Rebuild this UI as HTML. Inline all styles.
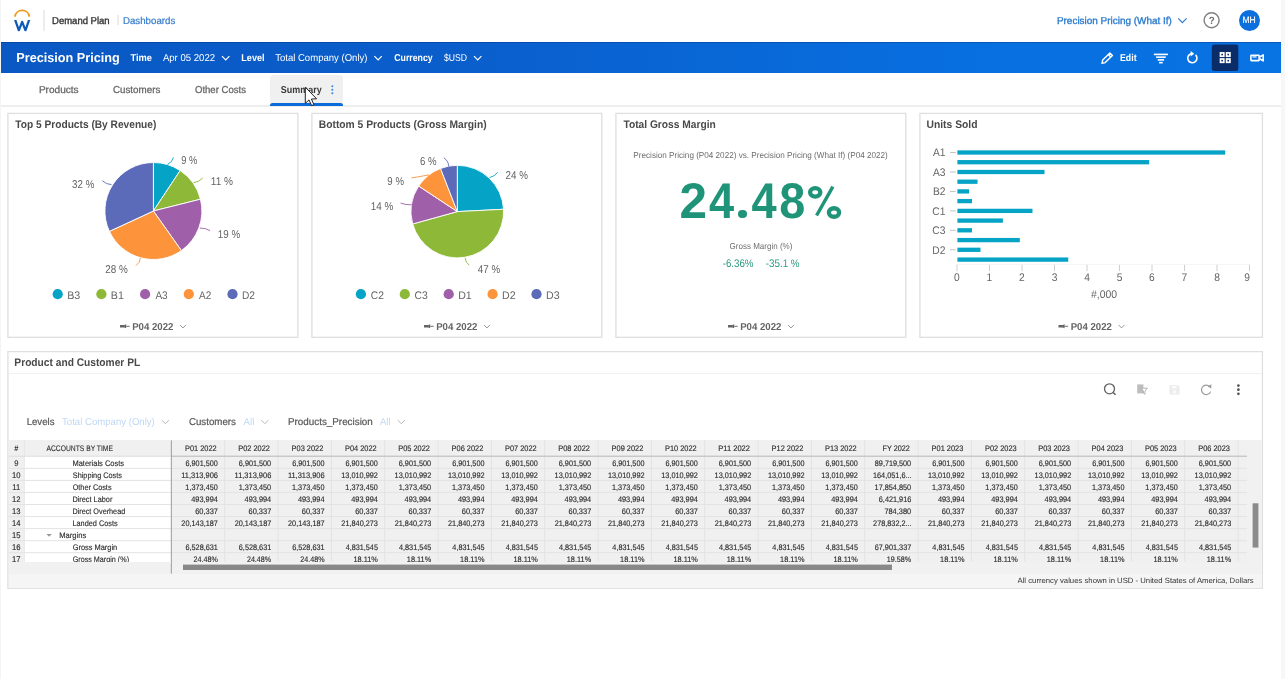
<!DOCTYPE html>
<html><head><meta charset="utf-8"><title>Precision Pricing</title>
<style>
html,body{margin:0;padding:0;background:#fff}
body{width:1285px;height:679px;position:relative;overflow:hidden;font-family:"Liberation Sans", sans-serif}
#t{filter:blur(0.3px)}
#t span{position:absolute;white-space:pre;font-family:"Liberation Sans", sans-serif;text-rendering:geometricPrecision;transform-origin:0 0}
svg{overflow:visible}
</style></head><body>
<div style="position:absolute;left:0;top:0;width:1px;height:679px;background:#f4f4f4"></div>
<div style="position:absolute;left:1281px;top:0;width:4px;height:679px;background:#f7f7f7"></div>
<svg style="position:absolute;left:10px;top:6px" width="26" height="28" viewBox="10 6 26 28">
<defs><clipPath id="wc"><rect x="12" y="20" width="22" height="11.5"/></clipPath></defs>
<path d="M14.93 16.6 A7.3 7.3 0 0 1 29.37 16.6" fill="none" stroke="#ee9a1e" stroke-width="1.9" stroke-linecap="butt"/>
<path d="M14.6 18.2 L18.85 30.3 L22.15 21.9 L25.45 30.3 L29.7 18.2" clip-path="url(#wc)" fill="none" stroke="#0d5bb8" stroke-width="2.25" stroke-linejoin="round"/>
</svg>
<div style="position:absolute;left:43.3px;top:9.7px;width:1.4px;height:21px;background:#ededed"></div>
<div style="position:absolute;left:117.4px;top:15.1px;width:1.3px;height:10.4px;background:#ececec"></div>
<svg style="position:absolute;left:1176px;top:15px" width="14" height="12" viewBox="1176 15 14 12">
<path d="M1178.2 18.4 L1182.4 22.6 L1186.6 18.4" fill="none" stroke="#2f7ccd" stroke-width="1.2"/></svg>
<svg style="position:absolute;left:1200px;top:9px" width="24" height="24" viewBox="1200 9 24 24">
<circle cx="1211.6" cy="20.2" r="7.5" fill="none" stroke="#808080" stroke-width="1.45"/></svg>
<div style="position:absolute;left:1238.5px;top:9.7px;width:21px;height:21px;border-radius:50%;background:#0b6fde"></div>
<div style="position:absolute;left:1px;top:41.6px;width:1280px;height:31.8px;background:linear-gradient(90deg,#0a58c4 0%,#0a5ecb 35%,#086fe0 75%,#0873e3 100%)"></div>
<div style="position:absolute;left:1px;top:41.6px;width:1280px;height:1px;background:rgba(5,40,110,0.35)"></div>
<svg style="position:absolute;left:0;top:40px" width="1285" height="36" viewBox="0 40 1285 36"><path d="M222.00 56.15 L225.70 59.85 L229.40 56.15" fill="none" stroke="#fff" stroke-width="1.2"/><path d="M374.40 56.15 L378.10 59.85 L381.80 56.15" fill="none" stroke="#fff" stroke-width="1.2"/><path d="M474.00 56.15 L477.70 59.85 L481.40 56.15" fill="none" stroke="#fff" stroke-width="1.2"/><g fill="none" stroke="#fff" stroke-width="1.45" stroke-linejoin="round"><path d="M1102 63.3 L1102.7 60.1 L1109.9 52.9 L1112.4 55.4 L1105.2 62.6 Z"/><path d="M1108.2 54.6 L1110.7 57.1"/></g><rect x="1153.90" y="53.60" width="14" height="1.6" fill="#fff"/><rect x="1156.10" y="56.35" width="9.6" height="1.6" fill="#fff"/><rect x="1157.70" y="59.10" width="6.4" height="1.6" fill="#fff"/><rect x="1159.10" y="61.85" width="3.6" height="1.6" fill="#fff"/><path d="M1191.2 53.7 A4.6 4.6 0 1 0 1195.6 54.9" fill="none" stroke="#fff" stroke-width="1.6"/><path d="M1190.6 51.0 L1194.3 53.7 L1190.6 56.4 Z" fill="#fff"/><rect x="1211.8" y="44.5" width="26.5" height="26.5" rx="2.5" fill="#0a2c69"/><rect x="1220.5" y="52.9" width="3.3" height="3.3" fill="none" stroke="#fff" stroke-width="1.7"/><rect x="1220.5" y="59.0" width="3.3" height="3.3" fill="none" stroke="#fff" stroke-width="1.7"/><rect x="1226.6" y="52.9" width="3.3" height="3.3" fill="none" stroke="#fff" stroke-width="1.7"/><rect x="1226.6" y="59.0" width="3.3" height="3.3" fill="none" stroke="#fff" stroke-width="1.7"/><g fill="none" stroke="#fff" stroke-width="1.6" stroke-linejoin="round"><rect x="1250.9" y="55.2" width="8.2" height="5.4" rx="0.5"/><path d="M1259.6 57.0 L1263.2 54.9 L1263.2 60.9 L1259.6 58.8" /></g><rect x="1252.4" y="56.3" width="4.2" height="1.2" fill="#fff"/></svg>
<div style="position:absolute;left:1px;top:105.2px;width:1280px;height:1.5px;background:#eeeeef"></div>
<div style="position:absolute;left:270.2px;top:75.4px;width:72.6px;height:30.4px;background:#f1f0f0;border-radius:3px 3px 0 0"></div>
<div style="position:absolute;left:270.2px;top:103px;width:72.6px;height:2.8px;background:#0b6bd8;border-radius:2.5px 2.5px 0 0"></div>
<svg style="position:absolute;left:328px;top:83px" width="9" height="14" viewBox="328 83 9 14">
<circle cx="332.3" cy="86.2" r="1.0" fill="#3583dc"/><circle cx="332.3" cy="89.7" r="1.0" fill="#3583dc"/><circle cx="332.3" cy="93.2" r="1.0" fill="#3583dc"/></svg>
<svg style="position:absolute;left:0;top:0" width="1285" height="679"><rect x="7.9" y="113.4" width="290.0" height="223.9" fill="#fff" stroke="#dfdfdf" stroke-width="1.3"/></svg>
<svg style="position:absolute;left:0;top:0" width="1285" height="679"><rect x="311.9" y="113.4" width="289.9" height="223.9" fill="#fff" stroke="#dfdfdf" stroke-width="1.3"/></svg>
<svg style="position:absolute;left:0;top:0" width="1285" height="679"><rect x="615.9" y="113.4" width="289.9" height="223.9" fill="#fff" stroke="#dfdfdf" stroke-width="1.3"/></svg>
<svg style="position:absolute;left:0;top:0" width="1285" height="679"><rect x="919.9" y="113.4" width="342.5000000000001" height="223.9" fill="#fff" stroke="#dfdfdf" stroke-width="1.3"/></svg>
<svg style="position:absolute;left:0;top:318px" width="1285" height="16" viewBox="0 318 1285 16"><rect x="120.00" y="325.0" width="4.4" height="2.5" fill="#646464"/><path d="M124.20 325.0 L126.10 324.2 V328.3 L124.20 327.5 Z" fill="#646464"/><rect x="126.00" y="325.8" width="3.7" height="0.9" fill="#646464"/><path d="M180.20 325.05 L183.00 327.95 L185.80 325.05" fill="none" stroke="#8f8f8f" stroke-width="0.95"/><rect x="424.00" y="325.0" width="4.4" height="2.5" fill="#646464"/><path d="M428.20 325.0 L430.10 324.2 V328.3 L428.20 327.5 Z" fill="#646464"/><rect x="430.00" y="325.8" width="3.7" height="0.9" fill="#646464"/><path d="M484.20 325.05 L487.00 327.95 L489.80 325.05" fill="none" stroke="#8f8f8f" stroke-width="0.95"/><rect x="728.00" y="325.0" width="4.4" height="2.5" fill="#646464"/><path d="M732.20 325.0 L734.10 324.2 V328.3 L732.20 327.5 Z" fill="#646464"/><rect x="734.00" y="325.8" width="3.7" height="0.9" fill="#646464"/><path d="M788.20 325.05 L791.00 327.95 L793.80 325.05" fill="none" stroke="#8f8f8f" stroke-width="0.95"/><rect x="1058.50" y="325.0" width="4.4" height="2.5" fill="#646464"/><path d="M1062.70 325.0 L1064.60 324.2 V328.3 L1062.70 327.5 Z" fill="#646464"/><rect x="1064.50" y="325.8" width="3.7" height="0.9" fill="#646464"/><path d="M1118.70 325.05 L1121.50 327.95 L1124.30 325.05" fill="none" stroke="#8f8f8f" stroke-width="0.95"/></svg>
<svg style="position:absolute;left:0;top:140px" width="1285" height="170" viewBox="0 140 1285 170"><path d="M153.4 211.0 L153.40 162.50 A48.5 48.5 0 0 1 180.15 170.55 Z" fill="#05a3c6" stroke="#fff" stroke-width="0.9" stroke-linejoin="round"/><path d="M153.4 211.0 L180.15 170.55 A48.5 48.5 0 0 1 200.45 199.23 Z" fill="#8db838" stroke="#fff" stroke-width="0.9" stroke-linejoin="round"/><path d="M153.4 211.0 L200.45 199.23 A48.5 48.5 0 0 1 181.41 250.59 Z" fill="#a05fa9" stroke="#fff" stroke-width="0.9" stroke-linejoin="round"/><path d="M153.4 211.0 L181.41 250.59 A48.5 48.5 0 0 1 109.39 231.37 Z" fill="#fd933b" stroke="#fff" stroke-width="0.9" stroke-linejoin="round"/><path d="M153.4 211.0 L109.39 231.37 A48.5 48.5 0 0 1 153.40 162.50 Z" fill="#5c6bb9" stroke="#fff" stroke-width="0.9" stroke-linejoin="round"/><path d="M167.6 164.4 Q172.25 162.35 173.4 157.4" fill="none" stroke="#05a3c6" stroke-width="0.9"/><path d="M193.6 182.7 Q199.09 182.17 202.7 178.0" fill="none" stroke="#8db838" stroke-width="0.9"/><path d="M199.8 228.1 Q205.32 227.81 210.1 230.6" fill="none" stroke="#a05fa9" stroke-width="0.9"/><path d="M140.4 258.0 Q140.05 262.93 135.9 265.6" fill="none" stroke="#fd933b" stroke-width="0.9"/><path d="M111.5 184.6 Q106.12 184.49 102.3 180.7" fill="none" stroke="#5c6bb9" stroke-width="0.9"/><path d="M457.3 211.6 L457.30 165.30 A46.3 46.3 0 0 1 503.54 209.27 Z" fill="#05a3c6" stroke="#fff" stroke-width="0.9" stroke-linejoin="round"/><path d="M457.3 211.6 L503.54 209.27 A46.3 46.3 0 0 1 412.68 223.96 Z" fill="#8db838" stroke="#fff" stroke-width="0.9" stroke-linejoin="round"/><path d="M457.3 211.6 L412.68 223.96 A46.3 46.3 0 0 1 418.68 186.06 Z" fill="#a05fa9" stroke="#fff" stroke-width="0.9" stroke-linejoin="round"/><path d="M457.3 211.6 L418.68 186.06 A46.3 46.3 0 0 1 440.53 168.45 Z" fill="#fd933b" stroke="#fff" stroke-width="0.9" stroke-linejoin="round"/><path d="M457.3 211.6 L440.53 168.45 A46.3 46.3 0 0 1 457.30 165.30 Z" fill="#5c6bb9" stroke="#fff" stroke-width="0.9" stroke-linejoin="round"/><path d="M489.5 177.6 Q494.68 176.54 497.7 172.2" fill="none" stroke="#05a3c6" stroke-width="0.9"/><path d="M465.2 258.0 Q465.45 262.62 469.3 265.2" fill="none" stroke="#8db838" stroke-width="0.9"/><path d="M411.5 204.8 Q405.88 205.04 400.6 203.1" fill="none" stroke="#a05fa9" stroke-width="0.9"/><path d="M429.0 174.9 Q420.25 176.45 411.5 178.0" fill="none" stroke="#fd933b" stroke-width="0.9"/><path d="M448.7 166.2 Q448.40 160.80 443.9 157.8" fill="none" stroke="#5c6bb9" stroke-width="0.9"/><circle cx="57.70" cy="294.2" r="5.1" fill="#05a3c6"/><circle cx="360.90" cy="294.2" r="5.1" fill="#05a3c6"/><circle cx="101.40" cy="294.2" r="5.1" fill="#8db838"/><circle cx="404.80" cy="294.2" r="5.1" fill="#8db838"/><circle cx="145.10" cy="294.2" r="5.1" fill="#a05fa9"/><circle cx="448.70" cy="294.2" r="5.1" fill="#a05fa9"/><circle cx="188.80" cy="294.2" r="5.1" fill="#fd933b"/><circle cx="492.60" cy="294.2" r="5.1" fill="#fd933b"/><circle cx="232.50" cy="294.2" r="5.1" fill="#5c6bb9"/><circle cx="536.50" cy="294.2" r="5.1" fill="#5c6bb9"/></svg>
<div style="position:absolute;left:738.3px;top:209.6px;width:8.8px;height:8.8px;border-radius:50%;background:#1f9479"></div>
<svg style="position:absolute;left:800px;top:180px" width="50" height="44" viewBox="800 180 50 44">
<g fill="none" stroke="#1f9479"><ellipse cx="815.2" cy="192.3" rx="5.1" ry="4.25" stroke-width="4.3"/><ellipse cx="834.0" cy="212.5" rx="5.1" ry="4.25" stroke-width="4.3"/>
<path d="M832.9 186.6 L816.6 215.5" stroke-width="3.4"/></g></svg>
<svg style="position:absolute;left:920px;top:140px" width="343" height="170" viewBox="920 140 343 170"><rect x="957.4" y="150.35" width="267.80" height="4.3" fill="#05a3c6"/><rect x="957.4" y="160.05" width="191.75" height="4.3" fill="#05a3c6"/><rect x="957.4" y="169.85" width="87.10" height="4.3" fill="#05a3c6"/><rect x="957.4" y="179.55" width="20.15" height="4.3" fill="#05a3c6"/><rect x="957.4" y="189.25" width="11.70" height="4.3" fill="#05a3c6"/><rect x="957.4" y="198.95" width="14.62" height="4.3" fill="#05a3c6"/><rect x="957.4" y="208.75" width="75.08" height="4.3" fill="#05a3c6"/><rect x="957.4" y="218.45" width="45.50" height="4.3" fill="#05a3c6"/><rect x="957.4" y="228.15" width="14.62" height="4.3" fill="#05a3c6"/><rect x="957.4" y="237.95" width="62.40" height="4.3" fill="#05a3c6"/><rect x="957.4" y="247.65" width="23.07" height="4.3" fill="#05a3c6"/><rect x="957.4" y="257.45" width="110.83" height="4.3" fill="#05a3c6"/><rect x="956.50" y="264.2" width="1" height="7" fill="#cfcfcf"/><rect x="989.00" y="264.2" width="1" height="7" fill="#cfcfcf"/><rect x="1021.50" y="264.2" width="1" height="7" fill="#cfcfcf"/><rect x="1054.00" y="264.2" width="1" height="7" fill="#cfcfcf"/><rect x="1086.50" y="264.2" width="1" height="7" fill="#cfcfcf"/><rect x="1119.00" y="264.2" width="1" height="7" fill="#cfcfcf"/><rect x="1151.50" y="264.2" width="1" height="7" fill="#cfcfcf"/><rect x="1184.00" y="264.2" width="1" height="7" fill="#cfcfcf"/><rect x="1216.50" y="264.2" width="1" height="7" fill="#cfcfcf"/><rect x="1249.00" y="264.2" width="1" height="7" fill="#cfcfcf"/><rect x="957" y="264.0" width="293" height="0.8" fill="#f3f3f3"/><rect x="950" y="152.00" width="5.8" height="1" fill="#c4c4c4"/><rect x="950" y="171.50" width="5.8" height="1" fill="#c4c4c4"/><rect x="950" y="190.90" width="5.8" height="1" fill="#c4c4c4"/><rect x="950" y="210.40" width="5.8" height="1" fill="#c4c4c4"/><rect x="950" y="229.80" width="5.8" height="1" fill="#c4c4c4"/><rect x="950" y="249.30" width="5.8" height="1" fill="#c4c4c4"/></svg>
<svg style="position:absolute;left:0;top:0" width="1285" height="679"><rect x="7.9" y="351.6" width="1254.5" height="236.69999999999993" fill="#fff" stroke="#dfdfdf" stroke-width="1.3"/></svg>
<div style="position:absolute;left:9px;top:373.2px;width:1253px;height:1px;background:#f1f1f1"></div>
<svg style="position:absolute;left:1095px;top:378px" width="160" height="24" viewBox="1095 378 160 24">
<circle cx="1109.5" cy="388.8" r="5.0" fill="none" stroke="#606060" stroke-width="1.3"/>
<path d="M1113.2 392.5 L1115.6 394.8" stroke="#5a5a5a" stroke-width="1.4" fill="none"/>
<rect x="1137.2" y="384.4" width="6.2" height="9" fill="#bdbdbd"/>
<path d="M1141.0 388.2 H1147.4 L1145 391 V394.3 L1143.4 393.2 V391 Z" fill="#fff" stroke="#a9a9a9" stroke-width="0.9" stroke-linejoin="round"/>
<path d="M1169.4 385 H1177.7 L1179.5 386.8 V394.4 H1169.4 Z" fill="#ececec"/>
<rect x="1171.6" y="385.9" width="5" height="2.6" fill="#fafafa"/><rect x="1172.8" y="390.4" width="3.4" height="3" fill="#fafafa"/>
<path d="M1209.6 386.6 A4.7 4.7 0 1 0 1210.6 391.6" fill="none" stroke="#9b9b9b" stroke-width="1.2"/>
<path d="M1211.4 384.3 L1211.2 388.4 L1207.6 386.6 Z" fill="#9b9b9b"/>
<circle cx="1238.4" cy="385.6" r="1.35" fill="#555"/><circle cx="1238.4" cy="389.7" r="1.35" fill="#555"/><circle cx="1238.4" cy="393.8" r="1.35" fill="#555"/>
</svg>
<svg style="position:absolute;left:0;top:414px" width="420" height="16" viewBox="0 414 420 16"><path d="M161.70 420.10 L165.30 423.70 L168.90 420.10" fill="none" stroke="#b8b8b8" stroke-width="1.0"/><path d="M261.30 420.10 L264.90 423.70 L268.50 420.10" fill="none" stroke="#b8b8b8" stroke-width="1.0"/><path d="M397.70 420.10 L401.30 423.70 L404.90 420.10" fill="none" stroke="#b8b8b8" stroke-width="1.0"/></svg>
<div style="position:absolute;left:8.6px;top:440.4px;width:1253.4px;height:133.20000000000005px;background:#f1f1f1"></div><div style="position:absolute;left:8.6px;top:573.6px;width:1253.4px;height:14.399999999999977px;background:#f5f5f5"></div><div style="position:absolute;left:8.6px;top:440.4px;width:1238.4px;height:121.39999999999998px;background:#f0f0f0"></div><div style="position:absolute;left:24.3px;top:456.3px;width:147.1px;height:105.49999999999994px;background:#fff"></div><svg style="position:absolute;left:0;top:438px" width="1285" height="140" viewBox="0 438 1285 140"><rect x="8.6" y="467.85" width="1238.4" height="1" fill="#e3e3e3"/><rect x="8.6" y="479.90" width="1238.4" height="1" fill="#e3e3e3"/><rect x="8.6" y="491.95" width="1238.4" height="1" fill="#e3e3e3"/><rect x="8.6" y="504.00" width="1238.4" height="1" fill="#e3e3e3"/><rect x="8.6" y="516.05" width="1238.4" height="1" fill="#e3e3e3"/><rect x="8.6" y="528.10" width="1238.4" height="1" fill="#e3e3e3"/><rect x="8.6" y="540.15" width="1238.4" height="1" fill="#e3e3e3"/><rect x="8.6" y="552.20" width="1238.4" height="1" fill="#e3e3e3"/><rect x="224.23" y="440.4" width="1" height="121.39999999999998" fill="#e3e3e3"/><rect x="277.57" y="440.4" width="1" height="121.39999999999998" fill="#e3e3e3"/><rect x="330.90" y="440.4" width="1" height="121.39999999999998" fill="#e3e3e3"/><rect x="384.23" y="440.4" width="1" height="121.39999999999998" fill="#e3e3e3"/><rect x="437.56" y="440.4" width="1" height="121.39999999999998" fill="#e3e3e3"/><rect x="490.90" y="440.4" width="1" height="121.39999999999998" fill="#e3e3e3"/><rect x="544.23" y="440.4" width="1" height="121.39999999999998" fill="#e3e3e3"/><rect x="597.56" y="440.4" width="1" height="121.39999999999998" fill="#e3e3e3"/><rect x="650.90" y="440.4" width="1" height="121.39999999999998" fill="#e3e3e3"/><rect x="704.23" y="440.4" width="1" height="121.39999999999998" fill="#e3e3e3"/><rect x="757.56" y="440.4" width="1" height="121.39999999999998" fill="#e3e3e3"/><rect x="810.90" y="440.4" width="1" height="121.39999999999998" fill="#e3e3e3"/><rect x="864.23" y="440.4" width="1" height="121.39999999999998" fill="#e3e3e3"/><rect x="917.56" y="440.4" width="1" height="121.39999999999998" fill="#e3e3e3"/><rect x="970.89" y="440.4" width="1" height="121.39999999999998" fill="#e3e3e3"/><rect x="1024.23" y="440.4" width="1" height="121.39999999999998" fill="#e3e3e3"/><rect x="1077.56" y="440.4" width="1" height="121.39999999999998" fill="#e3e3e3"/><rect x="1130.89" y="440.4" width="1" height="121.39999999999998" fill="#e3e3e3"/><rect x="1184.23" y="440.4" width="1" height="121.39999999999998" fill="#e3e3e3"/><rect x="1237.56" y="440.4" width="1" height="121.39999999999998" fill="#e3e3e3"/><rect x="23.8" y="440.4" width="1" height="121.39999999999998" fill="#e6e6e6"/><rect x="8.6" y="455.70" width="162.8" height="1" fill="#dcdcdc"/><rect x="171.4" y="455.60" width="1075.6" height="1.3" fill="#c4c4c4"/><rect x="170.80" y="440.4" width="1.2" height="133.20000000000005" fill="#a9a9a9"/><rect x="183.0" y="564.6" width="709" height="5.4" fill="#888"/><rect x="1252.6" y="503.3" width="5.8" height="44.3" fill="#8b8b8b"/><path d="M46.4 533.9 H51.8 L49.1 536.7 Z" fill="#999"/></svg>
<div style="position:absolute;left:8.6px;top:561.8px;width:1253.4px;height:2.6px;background:#f1f1f1;z-index:5"></div>
<div style="position:absolute;left:170.80px;top:561.8px;width:1.2px;height:2.6px;background:#a9a9a9;z-index:6"></div>
<svg style="position:absolute;left:303px;top:85px;z-index:20" width="18" height="22" viewBox="303 85 18 22">
<path d="M305.3 87.2 L305.3 103.4 L309.0 99.9 L311.6 105.6 L313.9 104.6 L311.4 99.0 L316.6 98.8 Z" fill="#fff" stroke="#222" stroke-width="1.0" stroke-linejoin="round"/></svg>
<div id="t">
<span style="left:52px;top:17px;font-size:10px;line-height:10px;color:#333;transform:translateX(0.06px) scaleX(0.9502);-webkit-text-stroke:0.35px #333">Demand Plan</span>
<span style="left:122px;top:17px;font-size:10px;line-height:10px;color:#387dca;transform:translateX(0.94px) scaleX(0.9711);-webkit-text-stroke:0.22px #387dca">Dashboards</span>
<span style="left:1056px;top:17px;font-size:10px;line-height:10px;color:#2f7ccd;transform:translateX(0.92px) scaleX(0.9949);-webkit-text-stroke:0.35px #2f7ccd">Precision Pricing (What If)</span>
<span style="left:1208px;top:16px;font-size:10.5px;line-height:10.5px;color:#707070;transform:translateX(0.80px) scaleX(0.9300);font-weight:700">?</span>
<span style="left:1242px;top:16px;font-size:9.2px;line-height:9.2px;color:#ffffff;transform:translateX(0.46px) scaleX(0.9300);-webkit-text-stroke:0.15px #ffffff">MH</span>
<span style="left:16px;top:51px;font-size:13px;line-height:13px;color:#fff;transform:translateX(0.31px) scaleX(0.9746);font-weight:700">Precision Pricing</span>
<span style="left:130px;top:54px;font-size:10px;line-height:10px;color:#fff;transform:translateX(0.40px) scaleX(0.9297);font-weight:700">Time</span>
<span style="left:162px;top:54px;font-size:10px;line-height:10px;color:#fff;transform:translateX(0.90px) scaleX(0.9578)">Apr 05 2022</span>
<span style="left:241px;top:54px;font-size:10px;line-height:10px;color:#fff;transform:translateX(0.33px) scaleX(0.9074);font-weight:700">Level</span>
<span style="left:275px;top:54px;font-size:10px;line-height:10px;color:#fff;transform:translateX(0.15px) scaleX(0.9550)">Total Company (Only)</span>
<span style="left:394px;top:54px;font-size:10px;line-height:10px;color:#fff;transform:translateX(0.23px) scaleX(0.8750);font-weight:700">Currency</span>
<span style="left:444px;top:54px;font-size:10px;line-height:10px;color:#fff;transform:translateX(0.00px) scaleX(0.8622)">$USD</span>
<span style="left:1120px;top:54px;font-size:10px;line-height:10px;color:#fff;transform:translateX(0.05px) scaleX(0.8730);font-weight:700">Edit</span>
<span style="left:38px;top:86px;font-size:10px;line-height:10px;color:#686868;transform:translateX(0.91px) scaleX(1.0060);-webkit-text-stroke:0.3px #686868">Products</span>
<span style="left:112px;top:86px;font-size:10px;line-height:10px;color:#686868;transform:translateX(0.94px) scaleX(0.9797);-webkit-text-stroke:0.3px #686868">Customers</span>
<span style="left:194px;top:86px;font-size:10px;line-height:10px;color:#686868;transform:translateX(0.95px) scaleX(0.9568);-webkit-text-stroke:0.3px #686868">Other Costs</span>
<span style="left:280px;top:86px;font-size:10px;line-height:10px;color:#3a3a3a;transform:translateX(0.76px) scaleX(0.8970);font-weight:700">Summary</span>
<span style="left:15px;top:120px;font-size:11px;line-height:11px;color:#494949;transform:translateX(0.30px) scaleX(0.9244);font-weight:700">Top 5 Products (By Revenue)</span>
<span style="left:318px;top:120px;font-size:11px;line-height:11px;color:#494949;transform:translateX(0.76px) scaleX(0.9345);font-weight:700">Bottom 5 Products (Gross Margin)</span>
<span style="left:623px;top:120px;font-size:11px;line-height:11px;color:#494949;transform:translateX(0.40px) scaleX(0.9293);font-weight:700">Total Gross Margin</span>
<span style="left:926px;top:120px;font-size:11px;line-height:11px;color:#494949;transform:translateX(0.52px) scaleX(0.9366);font-weight:700">Units Sold</span>
<span style="left:132px;top:323px;font-size:10px;line-height:10px;color:#646464;transform:translateX(0.20px) scaleX(0.9632);font-weight:700">P04 2022</span>
<span style="left:436px;top:323px;font-size:10px;line-height:10px;color:#646464;transform:translateX(0.20px) scaleX(0.9632);font-weight:700">P04 2022</span>
<span style="left:740px;top:323px;font-size:10px;line-height:10px;color:#646464;transform:translateX(0.20px) scaleX(0.9632);font-weight:700">P04 2022</span>
<span style="left:1070px;top:323px;font-size:10px;line-height:10px;color:#646464;transform:translateX(0.70px) scaleX(0.9632);font-weight:700">P04 2022</span>
<span style="left:181px;top:156px;font-size:11.4px;line-height:11.4px;color:#646464;transform:translateX(0.16px) scaleX(0.8205)">9 %</span>
<span style="left:210px;top:177px;font-size:11.4px;line-height:11.4px;color:#646464;transform:translateX(0.87px) scaleX(0.8843)">11 %</span>
<span style="left:217px;top:230px;font-size:11.4px;line-height:11.4px;color:#646464;transform:translateX(0.79px) scaleX(0.8583)">19 %</span>
<span style="left:105px;top:265px;font-size:11.4px;line-height:11.4px;color:#646464;transform:translateX(0.34px) scaleX(0.8682)">28 %</span>
<span style="left:72px;top:180px;font-size:11.4px;line-height:11.4px;color:#646464;transform:translateX(0.10px) scaleX(0.8542)">32 %</span>
<span style="left:505px;top:171px;font-size:11.4px;line-height:11.4px;color:#646464;transform:translateX(0.54px) scaleX(0.8602)">24 %</span>
<span style="left:477px;top:265px;font-size:11.4px;line-height:11.4px;color:#646464;transform:translateX(0.85px) scaleX(0.8560)">47 %</span>
<span style="left:370px;top:202px;font-size:11.4px;line-height:11.4px;color:#646464;transform:translateX(0.68px) scaleX(0.8704)">14 %</span>
<span style="left:387px;top:177px;font-size:11.4px;line-height:11.4px;color:#646464;transform:translateX(0.35px) scaleX(0.8471)">9 %</span>
<span style="left:419px;top:157px;font-size:11.4px;line-height:11.4px;color:#646464;transform:translateX(0.95px) scaleX(0.8471)">6 %</span>
<span style="left:67px;top:291px;font-size:11px;line-height:11px;color:#646464;transform:translateX(0.17px) scaleX(0.9712)">B3</span>
<span style="left:110px;top:291px;font-size:11px;line-height:11px;color:#646464;transform:translateX(0.87px) scaleX(0.9712)">B1</span>
<span style="left:155px;top:291px;font-size:11px;line-height:11px;color:#646464;transform:translateX(0.40px) scaleX(0.9071)">A3</span>
<span style="left:199px;top:291px;font-size:11px;line-height:11px;color:#646464;transform:translateX(0.10px) scaleX(0.9071)">A2</span>
<span style="left:242px;top:291px;font-size:11px;line-height:11px;color:#646464;transform:translateX(0.01px) scaleX(0.9250)">D2</span>
<span style="left:370px;top:291px;font-size:11px;line-height:11px;color:#646464;transform:translateX(0.72px) scaleX(0.9389)">C2</span>
<span style="left:414px;top:291px;font-size:11px;line-height:11px;color:#646464;transform:translateX(0.62px) scaleX(0.9389)">C3</span>
<span style="left:458px;top:291px;font-size:11px;line-height:11px;color:#646464;transform:translateX(0.17px) scaleX(0.9642)">D1</span>
<span style="left:502px;top:291px;font-size:11px;line-height:11px;color:#646464;transform:translateX(0.07px) scaleX(0.9642)">D2</span>
<span style="left:545px;top:291px;font-size:11px;line-height:11px;color:#646464;transform:translateX(0.97px) scaleX(0.9642)">D3</span>
<span style="left:633px;top:151px;font-size:8.6px;line-height:8.6px;color:#6e6e6e;transform:translateX(0.36px) scaleX(0.9460)">Precision Pricing (P04 2022) vs. Precision Pricing (What If) (P04 2022)</span>
<span style="left:679px;top:176px;font-size:50px;line-height:50px;color:#1f9479;transform:translateX(0.40px) scaleX(0.9900);font-weight:700">2</span>
<span style="left:709px;top:176px;font-size:50px;line-height:50px;color:#1f9479;transform:translateX(0.10px) scaleX(0.9031);font-weight:700">4</span>
<span style="left:751px;top:176px;font-size:50px;line-height:50px;color:#1f9479;transform:translateX(0.50px) scaleX(0.9031);font-weight:700">4</span>
<span style="left:779px;top:176px;font-size:50px;line-height:50px;color:#1f9479;transform:translateX(0.14px) scaleX(0.9360);font-weight:700">8</span>
<span style="left:729px;top:242px;font-size:8.6px;line-height:8.6px;color:#6e6e6e;transform:translateX(0.62px) scaleX(0.9319)">Gross Margin (%)</span>
<span style="left:722px;top:259px;font-size:11px;line-height:11px;color:#2a9a80;transform:translateX(0.70px) scaleX(0.8835)">-6.36%</span>
<span style="left:765px;top:259px;font-size:11px;line-height:11px;color:#2a9a80;transform:translateX(0.69px) scaleX(0.8943)">-35.1 %</span>
<span style="left:954px;top:273px;font-size:11px;line-height:11px;color:#646464;transform:translateX(0.12px) scaleX(0.9300)">0</span>
<span style="left:986px;top:273px;font-size:11px;line-height:11px;color:#646464;transform:translateX(0.54px) scaleX(0.9300)">1</span>
<span style="left:1019px;top:273px;font-size:11px;line-height:11px;color:#646464;transform:translateX(0.12px) scaleX(0.9300)">2</span>
<span style="left:1051px;top:273px;font-size:11px;line-height:11px;color:#646464;transform:translateX(0.70px) scaleX(0.9300)">3</span>
<span style="left:1084px;top:273px;font-size:11px;line-height:11px;color:#646464;transform:translateX(0.20px) scaleX(0.9300)">4</span>
<span style="left:1116px;top:273px;font-size:11px;line-height:11px;color:#646464;transform:translateX(0.70px) scaleX(0.9300)">5</span>
<span style="left:1149px;top:273px;font-size:11px;line-height:11px;color:#646464;transform:translateX(0.12px) scaleX(0.9300)">6</span>
<span style="left:1181px;top:273px;font-size:11px;line-height:11px;color:#646464;transform:translateX(0.62px) scaleX(0.9300)">7</span>
<span style="left:1214px;top:273px;font-size:11px;line-height:11px;color:#646464;transform:translateX(0.20px) scaleX(0.9300)">8</span>
<span style="left:1244px;top:273px;font-size:11px;line-height:11px;color:#646464;transform:translateX(0.22px) scaleX(0.9300)">9</span>
<span style="left:932px;top:148px;font-size:11px;line-height:11px;color:#646464;transform:translateX(0.90px) scaleX(0.9300)">A1</span>
<span style="left:932px;top:168px;font-size:11px;line-height:11px;color:#646464;transform:translateX(0.90px) scaleX(0.9300)">A3</span>
<span style="left:932px;top:187px;font-size:11px;line-height:11px;color:#646464;transform:translateX(0.90px) scaleX(0.9300)">B2</span>
<span style="left:932px;top:207px;font-size:11px;line-height:11px;color:#646464;transform:translateX(0.34px) scaleX(0.9300)">C1</span>
<span style="left:932px;top:226px;font-size:11px;line-height:11px;color:#646464;transform:translateX(0.34px) scaleX(0.9300)">C3</span>
<span style="left:932px;top:246px;font-size:11px;line-height:11px;color:#646464;transform:translateX(0.34px) scaleX(0.9300)">D2</span>
<span style="left:1091px;top:290px;font-size:11px;line-height:11px;color:#646464;transform:translateX(0.00px) scaleX(0.9467)">#,000</span>
<span style="left:14px;top:358px;font-size:11px;line-height:11px;color:#494949;transform:translateX(0.36px) scaleX(0.9273);font-weight:700">Product and Customer PL</span>
<span style="left:26px;top:418px;font-size:10px;line-height:10px;color:#585858;transform:translateX(0.65px) scaleX(0.9636);-webkit-text-stroke:0.22px #585858">Levels</span>
<span style="left:62px;top:418px;font-size:10px;line-height:10px;color:#bfd8f4;transform:translateX(0.05px) scaleX(0.9591)">Total Company (Only)</span>
<span style="left:188px;top:418px;font-size:10px;line-height:10px;color:#585858;transform:translateX(0.94px) scaleX(0.9713);-webkit-text-stroke:0.22px #585858">Customers</span>
<span style="left:243px;top:418px;font-size:10px;line-height:10px;color:#bfd8f4;transform:translateX(0.60px) scaleX(0.9661)">All</span>
<span style="left:288px;top:418px;font-size:10px;line-height:10px;color:#585858;transform:translateX(0.03px) scaleX(0.9834);-webkit-text-stroke:0.22px #585858">Products_Precision</span>
<span style="left:379px;top:418px;font-size:10px;line-height:10px;color:#bfd8f4;transform:translateX(0.90px) scaleX(0.9566)">All</span>
<span style="left:14px;top:445px;font-size:8.0px;line-height:8.0px;color:#2b2b2b;transform:translateX(0.31px) scaleX(0.9300);font-weight:700">#</span>
<span style="left:46px;top:445px;font-size:8.0px;line-height:8.0px;color:#2b2b2b;transform:translateX(0.50px) scaleX(0.8428);-webkit-text-stroke:0.1px #2b2b2b">ACCOUNTS BY TIME</span>
<span style="left:184px;top:445px;font-size:8.0px;line-height:8.0px;color:#2b2b2b;transform:translateX(0.96px) scaleX(0.9248);-webkit-text-stroke:0.14px #2b2b2b">P01 2022</span>
<span style="left:238px;top:445px;font-size:8.0px;line-height:8.0px;color:#2b2b2b;transform:translateX(0.29px) scaleX(0.9248);-webkit-text-stroke:0.14px #2b2b2b">P02 2022</span>
<span style="left:291px;top:445px;font-size:8.0px;line-height:8.0px;color:#2b2b2b;transform:translateX(0.62px) scaleX(0.9248);-webkit-text-stroke:0.14px #2b2b2b">P03 2022</span>
<span style="left:344px;top:445px;font-size:8.0px;line-height:8.0px;color:#2b2b2b;transform:translateX(0.95px) scaleX(0.9248);-webkit-text-stroke:0.14px #2b2b2b">P04 2022</span>
<span style="left:398px;top:445px;font-size:8.0px;line-height:8.0px;color:#2b2b2b;transform:translateX(0.29px) scaleX(0.9248);-webkit-text-stroke:0.14px #2b2b2b">P05 2022</span>
<span style="left:451px;top:445px;font-size:8.0px;line-height:8.0px;color:#2b2b2b;transform:translateX(0.62px) scaleX(0.9248);-webkit-text-stroke:0.14px #2b2b2b">P06 2022</span>
<span style="left:504px;top:445px;font-size:8.0px;line-height:8.0px;color:#2b2b2b;transform:translateX(0.95px) scaleX(0.9248);-webkit-text-stroke:0.14px #2b2b2b">P07 2022</span>
<span style="left:558px;top:445px;font-size:8.0px;line-height:8.0px;color:#2b2b2b;transform:translateX(0.29px) scaleX(0.9248);-webkit-text-stroke:0.14px #2b2b2b">P08 2022</span>
<span style="left:611px;top:445px;font-size:8.0px;line-height:8.0px;color:#2b2b2b;transform:translateX(0.62px) scaleX(0.9248);-webkit-text-stroke:0.14px #2b2b2b">P09 2022</span>
<span style="left:664px;top:445px;font-size:8.0px;line-height:8.0px;color:#2b2b2b;transform:translateX(0.95px) scaleX(0.9248);-webkit-text-stroke:0.14px #2b2b2b">P10 2022</span>
<span style="left:718px;top:445px;font-size:8.0px;line-height:8.0px;color:#2b2b2b;transform:translateX(0.27px) scaleX(0.9416);-webkit-text-stroke:0.14px #2b2b2b">P11 2022</span>
<span style="left:771px;top:445px;font-size:8.0px;line-height:8.0px;color:#2b2b2b;transform:translateX(0.62px) scaleX(0.9248);-webkit-text-stroke:0.14px #2b2b2b">P12 2022</span>
<span style="left:824px;top:445px;font-size:8.0px;line-height:8.0px;color:#2b2b2b;transform:translateX(0.95px) scaleX(0.9248);-webkit-text-stroke:0.14px #2b2b2b">P13 2022</span>
<span style="left:882px;top:445px;font-size:8.0px;line-height:8.0px;color:#2b2b2b;transform:translateX(0.49px) scaleX(0.9081);-webkit-text-stroke:0.14px #2b2b2b">FY 2022</span>
<span style="left:931px;top:445px;font-size:8.0px;line-height:8.0px;color:#2b2b2b;transform:translateX(0.62px) scaleX(0.9248);-webkit-text-stroke:0.14px #2b2b2b">P01 2023</span>
<span style="left:984px;top:445px;font-size:8.0px;line-height:8.0px;color:#2b2b2b;transform:translateX(0.95px) scaleX(0.9248);-webkit-text-stroke:0.14px #2b2b2b">P02 2023</span>
<span style="left:1038px;top:445px;font-size:8.0px;line-height:8.0px;color:#2b2b2b;transform:translateX(0.28px) scaleX(0.9248);-webkit-text-stroke:0.14px #2b2b2b">P03 2023</span>
<span style="left:1091px;top:445px;font-size:8.0px;line-height:8.0px;color:#2b2b2b;transform:translateX(0.62px) scaleX(0.9248);-webkit-text-stroke:0.14px #2b2b2b">P04 2023</span>
<span style="left:1144px;top:445px;font-size:8.0px;line-height:8.0px;color:#2b2b2b;transform:translateX(0.95px) scaleX(0.9248);-webkit-text-stroke:0.14px #2b2b2b">P05 2023</span>
<span style="left:1198px;top:445px;font-size:8.0px;line-height:8.0px;color:#2b2b2b;transform:translateX(0.28px) scaleX(0.9248);-webkit-text-stroke:0.14px #2b2b2b">P06 2023</span>
<span style="left:14px;top:460px;font-size:8.2px;line-height:8.2px;color:#2b2b2b;transform:translateX(0.26px) scaleX(0.9300);-webkit-text-stroke:0.14px #2b2b2b">9</span>
<span style="left:72px;top:460px;font-size:8.0px;line-height:8.0px;color:#2b2b2b;transform:translateX(0.41px) scaleX(0.9364);-webkit-text-stroke:0.14px #2b2b2b">Materials Costs</span>
<span style="left:185px;top:460px;font-size:8.0px;line-height:8.0px;color:#2b2b2b;transform:translateX(0.48px) scaleX(0.9085);-webkit-text-stroke:0.14px #2b2b2b">6,901,500</span>
<span style="left:238px;top:460px;font-size:8.0px;line-height:8.0px;color:#2b2b2b;transform:translateX(0.82px) scaleX(0.9085);-webkit-text-stroke:0.14px #2b2b2b">6,901,500</span>
<span style="left:292px;top:460px;font-size:8.0px;line-height:8.0px;color:#2b2b2b;transform:translateX(0.15px) scaleX(0.9085);-webkit-text-stroke:0.14px #2b2b2b">6,901,500</span>
<span style="left:345px;top:460px;font-size:8.0px;line-height:8.0px;color:#2b2b2b;transform:translateX(0.48px) scaleX(0.9085);-webkit-text-stroke:0.14px #2b2b2b">6,901,500</span>
<span style="left:398px;top:460px;font-size:8.0px;line-height:8.0px;color:#2b2b2b;transform:translateX(0.81px) scaleX(0.9085);-webkit-text-stroke:0.14px #2b2b2b">6,901,500</span>
<span style="left:452px;top:460px;font-size:8.0px;line-height:8.0px;color:#2b2b2b;transform:translateX(0.15px) scaleX(0.9085);-webkit-text-stroke:0.14px #2b2b2b">6,901,500</span>
<span style="left:505px;top:460px;font-size:8.0px;line-height:8.0px;color:#2b2b2b;transform:translateX(0.48px) scaleX(0.9085);-webkit-text-stroke:0.14px #2b2b2b">6,901,500</span>
<span style="left:558px;top:460px;font-size:8.0px;line-height:8.0px;color:#2b2b2b;transform:translateX(0.81px) scaleX(0.9085);-webkit-text-stroke:0.14px #2b2b2b">6,901,500</span>
<span style="left:612px;top:460px;font-size:8.0px;line-height:8.0px;color:#2b2b2b;transform:translateX(0.15px) scaleX(0.9085);-webkit-text-stroke:0.14px #2b2b2b">6,901,500</span>
<span style="left:665px;top:460px;font-size:8.0px;line-height:8.0px;color:#2b2b2b;transform:translateX(0.48px) scaleX(0.9085);-webkit-text-stroke:0.14px #2b2b2b">6,901,500</span>
<span style="left:718px;top:460px;font-size:8.0px;line-height:8.0px;color:#2b2b2b;transform:translateX(0.81px) scaleX(0.9085);-webkit-text-stroke:0.14px #2b2b2b">6,901,500</span>
<span style="left:772px;top:460px;font-size:8.0px;line-height:8.0px;color:#2b2b2b;transform:translateX(0.15px) scaleX(0.9085);-webkit-text-stroke:0.14px #2b2b2b">6,901,500</span>
<span style="left:825px;top:460px;font-size:8.0px;line-height:8.0px;color:#2b2b2b;transform:translateX(0.48px) scaleX(0.9085);-webkit-text-stroke:0.14px #2b2b2b">6,901,500</span>
<span style="left:874px;top:460px;font-size:8.0px;line-height:8.0px;color:#2b2b2b;transform:translateX(0.80px) scaleX(0.9078);-webkit-text-stroke:0.14px #2b2b2b">89,719,500</span>
<span style="left:932px;top:460px;font-size:8.0px;line-height:8.0px;color:#2b2b2b;transform:translateX(0.14px) scaleX(0.9085);-webkit-text-stroke:0.14px #2b2b2b">6,901,500</span>
<span style="left:985px;top:460px;font-size:8.0px;line-height:8.0px;color:#2b2b2b;transform:translateX(0.48px) scaleX(0.9085);-webkit-text-stroke:0.14px #2b2b2b">6,901,500</span>
<span style="left:1038px;top:460px;font-size:8.0px;line-height:8.0px;color:#2b2b2b;transform:translateX(0.81px) scaleX(0.9085);-webkit-text-stroke:0.14px #2b2b2b">6,901,500</span>
<span style="left:1092px;top:460px;font-size:8.0px;line-height:8.0px;color:#2b2b2b;transform:translateX(0.14px) scaleX(0.9085);-webkit-text-stroke:0.14px #2b2b2b">6,901,500</span>
<span style="left:1145px;top:460px;font-size:8.0px;line-height:8.0px;color:#2b2b2b;transform:translateX(0.48px) scaleX(0.9085);-webkit-text-stroke:0.14px #2b2b2b">6,901,500</span>
<span style="left:1198px;top:460px;font-size:8.0px;line-height:8.0px;color:#2b2b2b;transform:translateX(0.81px) scaleX(0.9085);-webkit-text-stroke:0.14px #2b2b2b">6,901,500</span>
<span style="left:12px;top:472px;font-size:8.2px;line-height:8.2px;color:#2b2b2b;transform:translateX(0.02px) scaleX(0.9300);-webkit-text-stroke:0.14px #2b2b2b">10</span>
<span style="left:72px;top:472px;font-size:8.0px;line-height:8.0px;color:#2b2b2b;transform:translateX(0.77px) scaleX(0.9135);-webkit-text-stroke:0.14px #2b2b2b">Shipping Costs</span>
<span style="left:181px;top:472px;font-size:8.0px;line-height:8.0px;color:#2b2b2b;transform:translateX(0.23px) scaleX(0.9306);-webkit-text-stroke:0.14px #2b2b2b">11,313,906</span>
<span style="left:234px;top:472px;font-size:8.0px;line-height:8.0px;color:#2b2b2b;transform:translateX(0.56px) scaleX(0.9306);-webkit-text-stroke:0.14px #2b2b2b">11,313,906</span>
<span style="left:287px;top:472px;font-size:8.0px;line-height:8.0px;color:#2b2b2b;transform:translateX(0.89px) scaleX(0.9306);-webkit-text-stroke:0.14px #2b2b2b">11,313,906</span>
<span style="left:341px;top:472px;font-size:8.0px;line-height:8.0px;color:#2b2b2b;transform:translateX(0.23px) scaleX(0.9165);-webkit-text-stroke:0.14px #2b2b2b">13,010,992</span>
<span style="left:394px;top:472px;font-size:8.0px;line-height:8.0px;color:#2b2b2b;transform:translateX(0.57px) scaleX(0.9165);-webkit-text-stroke:0.14px #2b2b2b">13,010,992</span>
<span style="left:447px;top:472px;font-size:8.0px;line-height:8.0px;color:#2b2b2b;transform:translateX(0.90px) scaleX(0.9165);-webkit-text-stroke:0.14px #2b2b2b">13,010,992</span>
<span style="left:501px;top:472px;font-size:8.0px;line-height:8.0px;color:#2b2b2b;transform:translateX(0.23px) scaleX(0.9165);-webkit-text-stroke:0.14px #2b2b2b">13,010,992</span>
<span style="left:554px;top:472px;font-size:8.0px;line-height:8.0px;color:#2b2b2b;transform:translateX(0.57px) scaleX(0.9165);-webkit-text-stroke:0.14px #2b2b2b">13,010,992</span>
<span style="left:607px;top:472px;font-size:8.0px;line-height:8.0px;color:#2b2b2b;transform:translateX(0.90px) scaleX(0.9165);-webkit-text-stroke:0.14px #2b2b2b">13,010,992</span>
<span style="left:661px;top:472px;font-size:8.0px;line-height:8.0px;color:#2b2b2b;transform:translateX(0.23px) scaleX(0.9165);-webkit-text-stroke:0.14px #2b2b2b">13,010,992</span>
<span style="left:714px;top:472px;font-size:8.0px;line-height:8.0px;color:#2b2b2b;transform:translateX(0.56px) scaleX(0.9165);-webkit-text-stroke:0.14px #2b2b2b">13,010,992</span>
<span style="left:767px;top:472px;font-size:8.0px;line-height:8.0px;color:#2b2b2b;transform:translateX(0.90px) scaleX(0.9165);-webkit-text-stroke:0.14px #2b2b2b">13,010,992</span>
<span style="left:821px;top:472px;font-size:8.0px;line-height:8.0px;color:#2b2b2b;transform:translateX(0.23px) scaleX(0.9165);-webkit-text-stroke:0.14px #2b2b2b">13,010,992</span>
<span style="left:872px;top:472px;font-size:8.0px;line-height:8.0px;color:#2b2b2b;transform:translateX(0.99px) scaleX(0.9141);-webkit-text-stroke:0.14px #2b2b2b">164,051,6...</span>
<span style="left:927px;top:472px;font-size:8.0px;line-height:8.0px;color:#2b2b2b;transform:translateX(0.90px) scaleX(0.9165);-webkit-text-stroke:0.14px #2b2b2b">13,010,992</span>
<span style="left:981px;top:472px;font-size:8.0px;line-height:8.0px;color:#2b2b2b;transform:translateX(0.23px) scaleX(0.9165);-webkit-text-stroke:0.14px #2b2b2b">13,010,992</span>
<span style="left:1034px;top:472px;font-size:8.0px;line-height:8.0px;color:#2b2b2b;transform:translateX(0.56px) scaleX(0.9165);-webkit-text-stroke:0.14px #2b2b2b">13,010,992</span>
<span style="left:1087px;top:472px;font-size:8.0px;line-height:8.0px;color:#2b2b2b;transform:translateX(0.90px) scaleX(0.9165);-webkit-text-stroke:0.14px #2b2b2b">13,010,992</span>
<span style="left:1141px;top:472px;font-size:8.0px;line-height:8.0px;color:#2b2b2b;transform:translateX(0.23px) scaleX(0.9165);-webkit-text-stroke:0.14px #2b2b2b">13,010,992</span>
<span style="left:1194px;top:472px;font-size:8.0px;line-height:8.0px;color:#2b2b2b;transform:translateX(0.56px) scaleX(0.9165);-webkit-text-stroke:0.14px #2b2b2b">13,010,992</span>
<span style="left:12px;top:484px;font-size:8.2px;line-height:8.2px;color:#2b2b2b;transform:translateX(0.36px) scaleX(0.9300);-webkit-text-stroke:0.14px #2b2b2b">11</span>
<span style="left:72px;top:484px;font-size:8.0px;line-height:8.0px;color:#2b2b2b;transform:translateX(0.66px) scaleX(0.9107);-webkit-text-stroke:0.14px #2b2b2b">Other Costs</span>
<span style="left:185px;top:484px;font-size:8.0px;line-height:8.0px;color:#2b2b2b;transform:translateX(0.37px) scaleX(0.9117);-webkit-text-stroke:0.14px #2b2b2b">1,373,450</span>
<span style="left:238px;top:484px;font-size:8.0px;line-height:8.0px;color:#2b2b2b;transform:translateX(0.70px) scaleX(0.9117);-webkit-text-stroke:0.14px #2b2b2b">1,373,450</span>
<span style="left:292px;top:484px;font-size:8.0px;line-height:8.0px;color:#2b2b2b;transform:translateX(0.03px) scaleX(0.9117);-webkit-text-stroke:0.14px #2b2b2b">1,373,450</span>
<span style="left:345px;top:484px;font-size:8.0px;line-height:8.0px;color:#2b2b2b;transform:translateX(0.37px) scaleX(0.9117);-webkit-text-stroke:0.14px #2b2b2b">1,373,450</span>
<span style="left:398px;top:484px;font-size:8.0px;line-height:8.0px;color:#2b2b2b;transform:translateX(0.70px) scaleX(0.9117);-webkit-text-stroke:0.14px #2b2b2b">1,373,450</span>
<span style="left:452px;top:484px;font-size:8.0px;line-height:8.0px;color:#2b2b2b;transform:translateX(0.03px) scaleX(0.9117);-webkit-text-stroke:0.14px #2b2b2b">1,373,450</span>
<span style="left:505px;top:484px;font-size:8.0px;line-height:8.0px;color:#2b2b2b;transform:translateX(0.37px) scaleX(0.9117);-webkit-text-stroke:0.14px #2b2b2b">1,373,450</span>
<span style="left:558px;top:484px;font-size:8.0px;line-height:8.0px;color:#2b2b2b;transform:translateX(0.70px) scaleX(0.9117);-webkit-text-stroke:0.14px #2b2b2b">1,373,450</span>
<span style="left:612px;top:484px;font-size:8.0px;line-height:8.0px;color:#2b2b2b;transform:translateX(0.03px) scaleX(0.9117);-webkit-text-stroke:0.14px #2b2b2b">1,373,450</span>
<span style="left:665px;top:484px;font-size:8.0px;line-height:8.0px;color:#2b2b2b;transform:translateX(0.36px) scaleX(0.9117);-webkit-text-stroke:0.14px #2b2b2b">1,373,450</span>
<span style="left:718px;top:484px;font-size:8.0px;line-height:8.0px;color:#2b2b2b;transform:translateX(0.70px) scaleX(0.9117);-webkit-text-stroke:0.14px #2b2b2b">1,373,450</span>
<span style="left:772px;top:484px;font-size:8.0px;line-height:8.0px;color:#2b2b2b;transform:translateX(0.03px) scaleX(0.9117);-webkit-text-stroke:0.14px #2b2b2b">1,373,450</span>
<span style="left:825px;top:484px;font-size:8.0px;line-height:8.0px;color:#2b2b2b;transform:translateX(0.36px) scaleX(0.9117);-webkit-text-stroke:0.14px #2b2b2b">1,373,450</span>
<span style="left:874px;top:484px;font-size:8.0px;line-height:8.0px;color:#2b2b2b;transform:translateX(0.57px) scaleX(0.9136);-webkit-text-stroke:0.14px #2b2b2b">17,854,850</span>
<span style="left:932px;top:484px;font-size:8.0px;line-height:8.0px;color:#2b2b2b;transform:translateX(0.03px) scaleX(0.9117);-webkit-text-stroke:0.14px #2b2b2b">1,373,450</span>
<span style="left:985px;top:484px;font-size:8.0px;line-height:8.0px;color:#2b2b2b;transform:translateX(0.36px) scaleX(0.9117);-webkit-text-stroke:0.14px #2b2b2b">1,373,450</span>
<span style="left:1038px;top:484px;font-size:8.0px;line-height:8.0px;color:#2b2b2b;transform:translateX(0.70px) scaleX(0.9117);-webkit-text-stroke:0.14px #2b2b2b">1,373,450</span>
<span style="left:1092px;top:484px;font-size:8.0px;line-height:8.0px;color:#2b2b2b;transform:translateX(0.03px) scaleX(0.9117);-webkit-text-stroke:0.14px #2b2b2b">1,373,450</span>
<span style="left:1145px;top:484px;font-size:8.0px;line-height:8.0px;color:#2b2b2b;transform:translateX(0.36px) scaleX(0.9117);-webkit-text-stroke:0.14px #2b2b2b">1,373,450</span>
<span style="left:1198px;top:484px;font-size:8.0px;line-height:8.0px;color:#2b2b2b;transform:translateX(0.69px) scaleX(0.9117);-webkit-text-stroke:0.14px #2b2b2b">1,373,450</span>
<span style="left:12px;top:496px;font-size:8.2px;line-height:8.2px;color:#2b2b2b;transform:translateX(0.08px) scaleX(0.9300);-webkit-text-stroke:0.14px #2b2b2b">12</span>
<span style="left:72px;top:496px;font-size:8.0px;line-height:8.0px;color:#2b2b2b;transform:translateX(0.43px) scaleX(0.9159);-webkit-text-stroke:0.14px #2b2b2b">Direct Labor</span>
<span style="left:191px;top:496px;font-size:8.0px;line-height:8.0px;color:#2b2b2b;transform:translateX(0.29px) scaleX(0.9173);-webkit-text-stroke:0.14px #2b2b2b">493,994</span>
<span style="left:244px;top:496px;font-size:8.0px;line-height:8.0px;color:#2b2b2b;transform:translateX(0.62px) scaleX(0.9173);-webkit-text-stroke:0.14px #2b2b2b">493,994</span>
<span style="left:297px;top:496px;font-size:8.0px;line-height:8.0px;color:#2b2b2b;transform:translateX(0.95px) scaleX(0.9173);-webkit-text-stroke:0.14px #2b2b2b">493,994</span>
<span style="left:351px;top:496px;font-size:8.0px;line-height:8.0px;color:#2b2b2b;transform:translateX(0.29px) scaleX(0.9173);-webkit-text-stroke:0.14px #2b2b2b">493,994</span>
<span style="left:404px;top:496px;font-size:8.0px;line-height:8.0px;color:#2b2b2b;transform:translateX(0.62px) scaleX(0.9173);-webkit-text-stroke:0.14px #2b2b2b">493,994</span>
<span style="left:457px;top:496px;font-size:8.0px;line-height:8.0px;color:#2b2b2b;transform:translateX(0.95px) scaleX(0.9173);-webkit-text-stroke:0.14px #2b2b2b">493,994</span>
<span style="left:511px;top:496px;font-size:8.0px;line-height:8.0px;color:#2b2b2b;transform:translateX(0.29px) scaleX(0.9173);-webkit-text-stroke:0.14px #2b2b2b">493,994</span>
<span style="left:564px;top:496px;font-size:8.0px;line-height:8.0px;color:#2b2b2b;transform:translateX(0.62px) scaleX(0.9173);-webkit-text-stroke:0.14px #2b2b2b">493,994</span>
<span style="left:617px;top:496px;font-size:8.0px;line-height:8.0px;color:#2b2b2b;transform:translateX(0.95px) scaleX(0.9173);-webkit-text-stroke:0.14px #2b2b2b">493,994</span>
<span style="left:671px;top:496px;font-size:8.0px;line-height:8.0px;color:#2b2b2b;transform:translateX(0.29px) scaleX(0.9173);-webkit-text-stroke:0.14px #2b2b2b">493,994</span>
<span style="left:724px;top:496px;font-size:8.0px;line-height:8.0px;color:#2b2b2b;transform:translateX(0.62px) scaleX(0.9173);-webkit-text-stroke:0.14px #2b2b2b">493,994</span>
<span style="left:777px;top:496px;font-size:8.0px;line-height:8.0px;color:#2b2b2b;transform:translateX(0.95px) scaleX(0.9173);-webkit-text-stroke:0.14px #2b2b2b">493,994</span>
<span style="left:831px;top:496px;font-size:8.0px;line-height:8.0px;color:#2b2b2b;transform:translateX(0.28px) scaleX(0.9173);-webkit-text-stroke:0.14px #2b2b2b">493,994</span>
<span style="left:878px;top:496px;font-size:8.0px;line-height:8.0px;color:#2b2b2b;transform:translateX(0.81px) scaleX(0.9117);-webkit-text-stroke:0.14px #2b2b2b">6,421,916</span>
<span style="left:937px;top:496px;font-size:8.0px;line-height:8.0px;color:#2b2b2b;transform:translateX(0.95px) scaleX(0.9173);-webkit-text-stroke:0.14px #2b2b2b">493,994</span>
<span style="left:991px;top:496px;font-size:8.0px;line-height:8.0px;color:#2b2b2b;transform:translateX(0.28px) scaleX(0.9173);-webkit-text-stroke:0.14px #2b2b2b">493,994</span>
<span style="left:1044px;top:496px;font-size:8.0px;line-height:8.0px;color:#2b2b2b;transform:translateX(0.62px) scaleX(0.9173);-webkit-text-stroke:0.14px #2b2b2b">493,994</span>
<span style="left:1097px;top:496px;font-size:8.0px;line-height:8.0px;color:#2b2b2b;transform:translateX(0.95px) scaleX(0.9173);-webkit-text-stroke:0.14px #2b2b2b">493,994</span>
<span style="left:1151px;top:496px;font-size:8.0px;line-height:8.0px;color:#2b2b2b;transform:translateX(0.28px) scaleX(0.9173);-webkit-text-stroke:0.14px #2b2b2b">493,994</span>
<span style="left:1204px;top:496px;font-size:8.0px;line-height:8.0px;color:#2b2b2b;transform:translateX(0.62px) scaleX(0.9173);-webkit-text-stroke:0.14px #2b2b2b">493,994</span>
<span style="left:12px;top:508px;font-size:8.2px;line-height:8.2px;color:#2b2b2b;transform:translateX(0.08px) scaleX(0.9300);-webkit-text-stroke:0.14px #2b2b2b">13</span>
<span style="left:72px;top:508px;font-size:8.0px;line-height:8.0px;color:#2b2b2b;transform:translateX(0.43px) scaleX(0.9060);-webkit-text-stroke:0.14px #2b2b2b">Direct Overhead</span>
<span style="left:195px;top:508px;font-size:8.0px;line-height:8.0px;color:#2b2b2b;transform:translateX(0.18px) scaleX(0.9298);-webkit-text-stroke:0.14px #2b2b2b">60,337</span>
<span style="left:248px;top:508px;font-size:8.0px;line-height:8.0px;color:#2b2b2b;transform:translateX(0.52px) scaleX(0.9298);-webkit-text-stroke:0.14px #2b2b2b">60,337</span>
<span style="left:301px;top:508px;font-size:8.0px;line-height:8.0px;color:#2b2b2b;transform:translateX(0.85px) scaleX(0.9298);-webkit-text-stroke:0.14px #2b2b2b">60,337</span>
<span style="left:355px;top:508px;font-size:8.0px;line-height:8.0px;color:#2b2b2b;transform:translateX(0.18px) scaleX(0.9298);-webkit-text-stroke:0.14px #2b2b2b">60,337</span>
<span style="left:408px;top:508px;font-size:8.0px;line-height:8.0px;color:#2b2b2b;transform:translateX(0.52px) scaleX(0.9298);-webkit-text-stroke:0.14px #2b2b2b">60,337</span>
<span style="left:461px;top:508px;font-size:8.0px;line-height:8.0px;color:#2b2b2b;transform:translateX(0.85px) scaleX(0.9298);-webkit-text-stroke:0.14px #2b2b2b">60,337</span>
<span style="left:515px;top:508px;font-size:8.0px;line-height:8.0px;color:#2b2b2b;transform:translateX(0.18px) scaleX(0.9298);-webkit-text-stroke:0.14px #2b2b2b">60,337</span>
<span style="left:568px;top:508px;font-size:8.0px;line-height:8.0px;color:#2b2b2b;transform:translateX(0.52px) scaleX(0.9298);-webkit-text-stroke:0.14px #2b2b2b">60,337</span>
<span style="left:621px;top:508px;font-size:8.0px;line-height:8.0px;color:#2b2b2b;transform:translateX(0.85px) scaleX(0.9298);-webkit-text-stroke:0.14px #2b2b2b">60,337</span>
<span style="left:675px;top:508px;font-size:8.0px;line-height:8.0px;color:#2b2b2b;transform:translateX(0.18px) scaleX(0.9298);-webkit-text-stroke:0.14px #2b2b2b">60,337</span>
<span style="left:728px;top:508px;font-size:8.0px;line-height:8.0px;color:#2b2b2b;transform:translateX(0.51px) scaleX(0.9298);-webkit-text-stroke:0.14px #2b2b2b">60,337</span>
<span style="left:781px;top:508px;font-size:8.0px;line-height:8.0px;color:#2b2b2b;transform:translateX(0.85px) scaleX(0.9298);-webkit-text-stroke:0.14px #2b2b2b">60,337</span>
<span style="left:835px;top:508px;font-size:8.0px;line-height:8.0px;color:#2b2b2b;transform:translateX(0.18px) scaleX(0.9298);-webkit-text-stroke:0.14px #2b2b2b">60,337</span>
<span style="left:884px;top:508px;font-size:8.0px;line-height:8.0px;color:#2b2b2b;transform:translateX(0.38px) scaleX(0.9254);-webkit-text-stroke:0.14px #2b2b2b">784,380</span>
<span style="left:941px;top:508px;font-size:8.0px;line-height:8.0px;color:#2b2b2b;transform:translateX(0.85px) scaleX(0.9298);-webkit-text-stroke:0.14px #2b2b2b">60,337</span>
<span style="left:995px;top:508px;font-size:8.0px;line-height:8.0px;color:#2b2b2b;transform:translateX(0.18px) scaleX(0.9298);-webkit-text-stroke:0.14px #2b2b2b">60,337</span>
<span style="left:1048px;top:508px;font-size:8.0px;line-height:8.0px;color:#2b2b2b;transform:translateX(0.51px) scaleX(0.9298);-webkit-text-stroke:0.14px #2b2b2b">60,337</span>
<span style="left:1101px;top:508px;font-size:8.0px;line-height:8.0px;color:#2b2b2b;transform:translateX(0.85px) scaleX(0.9298);-webkit-text-stroke:0.14px #2b2b2b">60,337</span>
<span style="left:1155px;top:508px;font-size:8.0px;line-height:8.0px;color:#2b2b2b;transform:translateX(0.18px) scaleX(0.9298);-webkit-text-stroke:0.14px #2b2b2b">60,337</span>
<span style="left:1208px;top:508px;font-size:8.0px;line-height:8.0px;color:#2b2b2b;transform:translateX(0.51px) scaleX(0.9298);-webkit-text-stroke:0.14px #2b2b2b">60,337</span>
<span style="left:12px;top:520px;font-size:8.2px;line-height:8.2px;color:#2b2b2b;transform:translateX(0.02px) scaleX(0.9300);-webkit-text-stroke:0.14px #2b2b2b">14</span>
<span style="left:72px;top:520px;font-size:8.0px;line-height:8.0px;color:#2b2b2b;transform:translateX(0.43px) scaleX(0.9156);-webkit-text-stroke:0.14px #2b2b2b">Landed Costs</span>
<span style="left:181px;top:520px;font-size:8.0px;line-height:8.0px;color:#2b2b2b;transform:translateX(0.35px) scaleX(0.9136);-webkit-text-stroke:0.14px #2b2b2b">20,143,187</span>
<span style="left:234px;top:520px;font-size:8.0px;line-height:8.0px;color:#2b2b2b;transform:translateX(0.68px) scaleX(0.9136);-webkit-text-stroke:0.14px #2b2b2b">20,143,187</span>
<span style="left:288px;top:520px;font-size:8.0px;line-height:8.0px;color:#2b2b2b;transform:translateX(0.02px) scaleX(0.9136);-webkit-text-stroke:0.14px #2b2b2b">20,143,187</span>
<span style="left:341px;top:520px;font-size:8.0px;line-height:8.0px;color:#2b2b2b;transform:translateX(0.35px) scaleX(0.9136);-webkit-text-stroke:0.14px #2b2b2b">21,840,273</span>
<span style="left:394px;top:520px;font-size:8.0px;line-height:8.0px;color:#2b2b2b;transform:translateX(0.68px) scaleX(0.9136);-webkit-text-stroke:0.14px #2b2b2b">21,840,273</span>
<span style="left:448px;top:520px;font-size:8.0px;line-height:8.0px;color:#2b2b2b;transform:translateX(0.02px) scaleX(0.9136);-webkit-text-stroke:0.14px #2b2b2b">21,840,273</span>
<span style="left:501px;top:520px;font-size:8.0px;line-height:8.0px;color:#2b2b2b;transform:translateX(0.35px) scaleX(0.9136);-webkit-text-stroke:0.14px #2b2b2b">21,840,273</span>
<span style="left:554px;top:520px;font-size:8.0px;line-height:8.0px;color:#2b2b2b;transform:translateX(0.68px) scaleX(0.9136);-webkit-text-stroke:0.14px #2b2b2b">21,840,273</span>
<span style="left:608px;top:520px;font-size:8.0px;line-height:8.0px;color:#2b2b2b;transform:translateX(0.01px) scaleX(0.9136);-webkit-text-stroke:0.14px #2b2b2b">21,840,273</span>
<span style="left:661px;top:520px;font-size:8.0px;line-height:8.0px;color:#2b2b2b;transform:translateX(0.35px) scaleX(0.9136);-webkit-text-stroke:0.14px #2b2b2b">21,840,273</span>
<span style="left:714px;top:520px;font-size:8.0px;line-height:8.0px;color:#2b2b2b;transform:translateX(0.68px) scaleX(0.9136);-webkit-text-stroke:0.14px #2b2b2b">21,840,273</span>
<span style="left:768px;top:520px;font-size:8.0px;line-height:8.0px;color:#2b2b2b;transform:translateX(0.01px) scaleX(0.9136);-webkit-text-stroke:0.14px #2b2b2b">21,840,273</span>
<span style="left:821px;top:520px;font-size:8.0px;line-height:8.0px;color:#2b2b2b;transform:translateX(0.35px) scaleX(0.9136);-webkit-text-stroke:0.14px #2b2b2b">21,840,273</span>
<span style="left:873px;top:520px;font-size:8.0px;line-height:8.0px;color:#2b2b2b;transform:translateX(0.11px) scaleX(0.9113);-webkit-text-stroke:0.14px #2b2b2b">278,832,2...</span>
<span style="left:928px;top:520px;font-size:8.0px;line-height:8.0px;color:#2b2b2b;transform:translateX(0.01px) scaleX(0.9136);-webkit-text-stroke:0.14px #2b2b2b">21,840,273</span>
<span style="left:981px;top:520px;font-size:8.0px;line-height:8.0px;color:#2b2b2b;transform:translateX(0.35px) scaleX(0.9136);-webkit-text-stroke:0.14px #2b2b2b">21,840,273</span>
<span style="left:1034px;top:520px;font-size:8.0px;line-height:8.0px;color:#2b2b2b;transform:translateX(0.68px) scaleX(0.9136);-webkit-text-stroke:0.14px #2b2b2b">21,840,273</span>
<span style="left:1088px;top:520px;font-size:8.0px;line-height:8.0px;color:#2b2b2b;transform:translateX(0.01px) scaleX(0.9136);-webkit-text-stroke:0.14px #2b2b2b">21,840,273</span>
<span style="left:1141px;top:520px;font-size:8.0px;line-height:8.0px;color:#2b2b2b;transform:translateX(0.34px) scaleX(0.9136);-webkit-text-stroke:0.14px #2b2b2b">21,840,273</span>
<span style="left:1194px;top:520px;font-size:8.0px;line-height:8.0px;color:#2b2b2b;transform:translateX(0.68px) scaleX(0.9136);-webkit-text-stroke:0.14px #2b2b2b">21,840,273</span>
<span style="left:12px;top:532px;font-size:8.2px;line-height:8.2px;color:#2b2b2b;transform:translateX(0.08px) scaleX(0.9300);-webkit-text-stroke:0.14px #2b2b2b">15</span>
<span style="left:59px;top:532px;font-size:8.0px;line-height:8.0px;color:#2b2b2b;transform:translateX(0.31px) scaleX(0.9464);-webkit-text-stroke:0.14px #2b2b2b">Margins</span>
<span style="left:12px;top:544px;font-size:8.2px;line-height:8.2px;color:#2b2b2b;transform:translateX(0.08px) scaleX(0.9300);-webkit-text-stroke:0.14px #2b2b2b">16</span>
<span style="left:72px;top:544px;font-size:8.0px;line-height:8.0px;color:#2b2b2b;transform:translateX(0.65px) scaleX(0.9282);-webkit-text-stroke:0.14px #2b2b2b">Gross Margin</span>
<span style="left:185px;top:544px;font-size:8.0px;line-height:8.0px;color:#2b2b2b;transform:translateX(0.48px) scaleX(0.9117);-webkit-text-stroke:0.14px #2b2b2b">6,528,631</span>
<span style="left:238px;top:544px;font-size:8.0px;line-height:8.0px;color:#2b2b2b;transform:translateX(0.81px) scaleX(0.9117);-webkit-text-stroke:0.14px #2b2b2b">6,528,631</span>
<span style="left:292px;top:544px;font-size:8.0px;line-height:8.0px;color:#2b2b2b;transform:translateX(0.15px) scaleX(0.9117);-webkit-text-stroke:0.14px #2b2b2b">6,528,631</span>
<span style="left:345px;top:544px;font-size:8.0px;line-height:8.0px;color:#2b2b2b;transform:translateX(0.71px) scaleX(0.9052);-webkit-text-stroke:0.14px #2b2b2b">4,831,545</span>
<span style="left:399px;top:544px;font-size:8.0px;line-height:8.0px;color:#2b2b2b;transform:translateX(0.04px) scaleX(0.9052);-webkit-text-stroke:0.14px #2b2b2b">4,831,545</span>
<span style="left:452px;top:544px;font-size:8.0px;line-height:8.0px;color:#2b2b2b;transform:translateX(0.37px) scaleX(0.9052);-webkit-text-stroke:0.14px #2b2b2b">4,831,545</span>
<span style="left:505px;top:544px;font-size:8.0px;line-height:8.0px;color:#2b2b2b;transform:translateX(0.71px) scaleX(0.9052);-webkit-text-stroke:0.14px #2b2b2b">4,831,545</span>
<span style="left:559px;top:544px;font-size:8.0px;line-height:8.0px;color:#2b2b2b;transform:translateX(0.04px) scaleX(0.9052);-webkit-text-stroke:0.14px #2b2b2b">4,831,545</span>
<span style="left:612px;top:544px;font-size:8.0px;line-height:8.0px;color:#2b2b2b;transform:translateX(0.37px) scaleX(0.9052);-webkit-text-stroke:0.14px #2b2b2b">4,831,545</span>
<span style="left:665px;top:544px;font-size:8.0px;line-height:8.0px;color:#2b2b2b;transform:translateX(0.71px) scaleX(0.9052);-webkit-text-stroke:0.14px #2b2b2b">4,831,545</span>
<span style="left:719px;top:544px;font-size:8.0px;line-height:8.0px;color:#2b2b2b;transform:translateX(0.04px) scaleX(0.9052);-webkit-text-stroke:0.14px #2b2b2b">4,831,545</span>
<span style="left:772px;top:544px;font-size:8.0px;line-height:8.0px;color:#2b2b2b;transform:translateX(0.37px) scaleX(0.9052);-webkit-text-stroke:0.14px #2b2b2b">4,831,545</span>
<span style="left:825px;top:544px;font-size:8.0px;line-height:8.0px;color:#2b2b2b;transform:translateX(0.71px) scaleX(0.9052);-webkit-text-stroke:0.14px #2b2b2b">4,831,545</span>
<span style="left:874px;top:544px;font-size:8.0px;line-height:8.0px;color:#2b2b2b;transform:translateX(0.68px) scaleX(0.9136);-webkit-text-stroke:0.14px #2b2b2b">67,901,337</span>
<span style="left:932px;top:544px;font-size:8.0px;line-height:8.0px;color:#2b2b2b;transform:translateX(0.37px) scaleX(0.9052);-webkit-text-stroke:0.14px #2b2b2b">4,831,545</span>
<span style="left:985px;top:544px;font-size:8.0px;line-height:8.0px;color:#2b2b2b;transform:translateX(0.70px) scaleX(0.9052);-webkit-text-stroke:0.14px #2b2b2b">4,831,545</span>
<span style="left:1039px;top:544px;font-size:8.0px;line-height:8.0px;color:#2b2b2b;transform:translateX(0.04px) scaleX(0.9052);-webkit-text-stroke:0.14px #2b2b2b">4,831,545</span>
<span style="left:1092px;top:544px;font-size:8.0px;line-height:8.0px;color:#2b2b2b;transform:translateX(0.37px) scaleX(0.9052);-webkit-text-stroke:0.14px #2b2b2b">4,831,545</span>
<span style="left:1145px;top:544px;font-size:8.0px;line-height:8.0px;color:#2b2b2b;transform:translateX(0.70px) scaleX(0.9052);-webkit-text-stroke:0.14px #2b2b2b">4,831,545</span>
<span style="left:1199px;top:544px;font-size:8.0px;line-height:8.0px;color:#2b2b2b;transform:translateX(0.04px) scaleX(0.9052);-webkit-text-stroke:0.14px #2b2b2b">4,831,545</span>
<span style="left:12px;top:556px;font-size:8.2px;line-height:8.2px;color:#2b2b2b;transform:translateX(0.08px) scaleX(0.9300);-webkit-text-stroke:0.14px #2b2b2b">17</span>
<span style="left:72px;top:556px;font-size:8.0px;line-height:8.0px;color:#2b2b2b;transform:translateX(0.66px) scaleX(0.9000);-webkit-text-stroke:0.14px #2b2b2b">Gross Margin (%)</span>
<span style="left:193px;top:556px;font-size:8.0px;line-height:8.0px;color:#2b2b2b;transform:translateX(0.58px) scaleX(0.8944);-webkit-text-stroke:0.14px #2b2b2b">24.48%</span>
<span style="left:246px;top:556px;font-size:8.0px;line-height:8.0px;color:#2b2b2b;transform:translateX(0.91px) scaleX(0.8944);-webkit-text-stroke:0.14px #2b2b2b">24.48%</span>
<span style="left:300px;top:556px;font-size:8.0px;line-height:8.0px;color:#2b2b2b;transform:translateX(0.24px) scaleX(0.8944);-webkit-text-stroke:0.14px #2b2b2b">24.48%</span>
<span style="left:353px;top:556px;font-size:8.0px;line-height:8.0px;color:#2b2b2b;transform:translateX(0.45px) scaleX(0.9194);-webkit-text-stroke:0.14px #2b2b2b">18.11%</span>
<span style="left:406px;top:556px;font-size:8.0px;line-height:8.0px;color:#2b2b2b;transform:translateX(0.79px) scaleX(0.9194);-webkit-text-stroke:0.14px #2b2b2b">18.11%</span>
<span style="left:460px;top:556px;font-size:8.0px;line-height:8.0px;color:#2b2b2b;transform:translateX(0.12px) scaleX(0.9194);-webkit-text-stroke:0.14px #2b2b2b">18.11%</span>
<span style="left:513px;top:556px;font-size:8.0px;line-height:8.0px;color:#2b2b2b;transform:translateX(0.45px) scaleX(0.9194);-webkit-text-stroke:0.14px #2b2b2b">18.11%</span>
<span style="left:566px;top:556px;font-size:8.0px;line-height:8.0px;color:#2b2b2b;transform:translateX(0.78px) scaleX(0.9194);-webkit-text-stroke:0.14px #2b2b2b">18.11%</span>
<span style="left:620px;top:556px;font-size:8.0px;line-height:8.0px;color:#2b2b2b;transform:translateX(0.12px) scaleX(0.9194);-webkit-text-stroke:0.14px #2b2b2b">18.11%</span>
<span style="left:673px;top:556px;font-size:8.0px;line-height:8.0px;color:#2b2b2b;transform:translateX(0.45px) scaleX(0.9194);-webkit-text-stroke:0.14px #2b2b2b">18.11%</span>
<span style="left:726px;top:556px;font-size:8.0px;line-height:8.0px;color:#2b2b2b;transform:translateX(0.78px) scaleX(0.9194);-webkit-text-stroke:0.14px #2b2b2b">18.11%</span>
<span style="left:780px;top:556px;font-size:8.0px;line-height:8.0px;color:#2b2b2b;transform:translateX(0.12px) scaleX(0.9194);-webkit-text-stroke:0.14px #2b2b2b">18.11%</span>
<span style="left:833px;top:556px;font-size:8.0px;line-height:8.0px;color:#2b2b2b;transform:translateX(0.45px) scaleX(0.9194);-webkit-text-stroke:0.14px #2b2b2b">18.11%</span>
<span style="left:886px;top:556px;font-size:8.0px;line-height:8.0px;color:#2b2b2b;transform:translateX(0.79px) scaleX(0.8987);-webkit-text-stroke:0.14px #2b2b2b">19.58%</span>
<span style="left:940px;top:556px;font-size:8.0px;line-height:8.0px;color:#2b2b2b;transform:translateX(0.12px) scaleX(0.9194);-webkit-text-stroke:0.14px #2b2b2b">18.11%</span>
<span style="left:993px;top:556px;font-size:8.0px;line-height:8.0px;color:#2b2b2b;transform:translateX(0.45px) scaleX(0.9194);-webkit-text-stroke:0.14px #2b2b2b">18.11%</span>
<span style="left:1046px;top:556px;font-size:8.0px;line-height:8.0px;color:#2b2b2b;transform:translateX(0.78px) scaleX(0.9194);-webkit-text-stroke:0.14px #2b2b2b">18.11%</span>
<span style="left:1100px;top:556px;font-size:8.0px;line-height:8.0px;color:#2b2b2b;transform:translateX(0.11px) scaleX(0.9194);-webkit-text-stroke:0.14px #2b2b2b">18.11%</span>
<span style="left:1153px;top:556px;font-size:8.0px;line-height:8.0px;color:#2b2b2b;transform:translateX(0.45px) scaleX(0.9194);-webkit-text-stroke:0.14px #2b2b2b">18.11%</span>
<span style="left:1206px;top:556px;font-size:8.0px;line-height:8.0px;color:#2b2b2b;transform:translateX(0.78px) scaleX(0.9194);-webkit-text-stroke:0.14px #2b2b2b">18.11%</span>
<span style="left:1017px;top:577px;font-size:7.6px;line-height:7.6px;color:#333;transform:translateX(0.50px) scaleX(1.0172)">All currency values shown in USD - United States of America, Dollars</span>
</div>
</body></html>
